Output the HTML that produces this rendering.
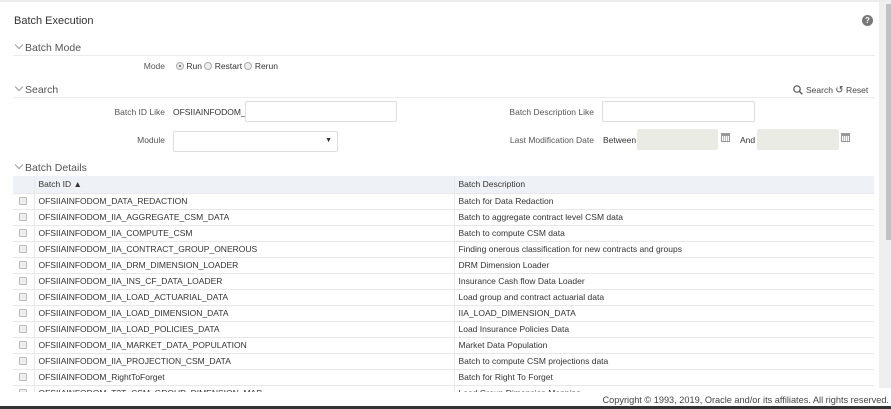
<!DOCTYPE html>
<html><head><meta charset="utf-8"><style>
*{margin:0;padding:0;box-sizing:border-box}
body{width:891px;height:409px;overflow:hidden;background:#fff;font-family:"Liberation Sans",sans-serif;color:#333;position:relative;font-size:9px}
.a{position:absolute;white-space:nowrap}
.sec{position:absolute;left:14px;font-size:10.5px;color:#555}
.sec:before{content:"";display:inline-block;width:5px;height:5px;border-right:1px solid #999;border-bottom:1px solid #999;transform:rotate(45deg);margin:0 3px 3px 2px}
.hr{position:absolute;left:13px;width:862px;height:1px;background:#ececec}
.lbl{position:absolute;color:#555;font-size:8.5px;text-align:right}
.inp{position:absolute;border:1px solid #ddd;border-radius:2px;background:#fff}
.rad{display:inline-block;width:8px;height:8px;border:1px solid #aaa;border-radius:50%;vertical-align:-1px;background:#eee;position:relative}
.rad.on:after{content:"";position:absolute;left:2px;top:2px;width:2px;height:2px;border-radius:50%;background:#555}
table{position:absolute;left:13px;top:176px;width:861px;border-collapse:collapse;font-size:8.5px}
td{height:16px;border-bottom:1px solid #e8e8e8;padding-left:4px;color:#333;white-space:nowrap}
td.c{width:21px;padding-left:6px}
td.i{width:420px;border-left:1px solid #e8e8e8}
td.d{border-left:1px solid #e8e8e8}
tr.h td{background:#eef2f6;height:17px}
.cb{display:inline-block;width:8px;height:8px;border:1px solid #bbb;border-radius:1px;background:#eee;vertical-align:-1px}
.cal{position:absolute;width:9px;height:9px;border:1px solid #999;border-top:3px solid #999;background:repeating-linear-gradient(90deg,#fff 0 1px,#bbb 1px 2px)}
</style></head><body>
<div style="position:absolute;left:0;top:0;width:891px;height:2px;background:#ececec"></div>
<div class="a" style="left:14px;top:15px;font-size:11px;color:#333">Batch Execution</div>
<div class="a" style="left:862px;top:15px;width:11px;height:11px;border-radius:50%;background:#777;color:#fff;font-size:8px;font-weight:bold;text-align:center;line-height:11px">?</div>

<div class="sec" style="top:42px">Batch Mode</div>
<div class="hr" style="top:55px"></div>
<div class="lbl" style="left:100px;width:65px;top:61px">Mode</div>
<div class="a" style="left:176px;top:61px;font-size:8.5px"><span class="rad on"></span> Run <span class="rad"></span> Restart <span class="rad"></span> Rerun</div>

<div class="sec" style="top:84px">Search</div>
<div class="hr" style="top:97px"></div>
<svg class="a" style="left:793px;top:85px" width="10" height="10" viewBox="0 0 10 10"><circle cx="4" cy="4" r="3.2" fill="none" stroke="#555" stroke-width="1.2"/><path d="M6.3 6.3L9.3 9.3" stroke="#555" stroke-width="1.4"/></svg>
<div class="a" style="left:806px;top:85px;font-size:8.5px;color:#444">Search <span style="font-size:10px">&#8634;</span> Reset</div>
<div class="lbl" style="left:80px;width:85px;top:107px">Batch ID Like</div>
<div class="a" style="left:173px;top:107px;font-size:8.5px">OFSIIAINFODOM_</div>
<div class="inp" style="left:245px;top:101px;width:152px;height:21px"></div>
<div class="lbl" style="left:480px;width:114px;top:107px">Batch Description Like</div>
<div class="inp" style="left:602px;top:101px;width:153px;height:21px"></div>
<div class="lbl" style="left:80px;width:85px;top:135px">Module</div>
<div class="inp" style="left:173px;top:131px;width:165px;height:21px"><span class="a" style="right:5px;top:5px;font-size:7px">&#9660;</span></div>
<div class="lbl" style="left:480px;width:114px;top:135px">Last Modification Date</div>
<div class="a" style="left:603px;top:135px;font-size:8.5px">Between</div>
<div class="a" style="left:637px;top:129px;width:81px;height:21px;background:#ebebe6;border-radius:2px"></div>
<div class="cal" style="left:721px;top:133px"></div>
<div class="a" style="left:740px;top:135px;font-size:8.5px">And</div>
<div class="a" style="left:757px;top:129px;width:82px;height:21px;background:#ebebe6;border-radius:2px"></div>
<div class="cal" style="left:841px;top:133px"></div>

<div class="sec" style="top:162px">Batch Details</div>
<div style="position:absolute;left:0;top:176px;width:880px;height:216px;overflow:hidden">
<table style="left:13px;top:0">
<tr class="h"><td class="c"></td><td class="i">Batch ID &#9650;</td><td class="d">Batch Description</td></tr>
<tr><td class="c"><span class="cb"></span></td><td class="i">OFSIIAINFODOM_DATA_REDACTION</td><td class="d">Batch for Data Redaction</td></tr>
<tr><td class="c"><span class="cb"></span></td><td class="i">OFSIIAINFODOM_IIA_AGGREGATE_CSM_DATA</td><td class="d">Batch to aggregate contract level CSM data</td></tr>
<tr><td class="c"><span class="cb"></span></td><td class="i">OFSIIAINFODOM_IIA_COMPUTE_CSM</td><td class="d">Batch to compute CSM data</td></tr>
<tr><td class="c"><span class="cb"></span></td><td class="i">OFSIIAINFODOM_IIA_CONTRACT_GROUP_ONEROUS</td><td class="d">Finding onerous classification for new contracts and groups</td></tr>
<tr><td class="c"><span class="cb"></span></td><td class="i">OFSIIAINFODOM_IIA_DRM_DIMENSION_LOADER</td><td class="d">DRM Dimension Loader</td></tr>
<tr><td class="c"><span class="cb"></span></td><td class="i">OFSIIAINFODOM_IIA_INS_CF_DATA_LOADER</td><td class="d">Insurance Cash flow Data Loader</td></tr>
<tr><td class="c"><span class="cb"></span></td><td class="i">OFSIIAINFODOM_IIA_LOAD_ACTUARIAL_DATA</td><td class="d">Load group and contract actuarial data</td></tr>
<tr><td class="c"><span class="cb"></span></td><td class="i">OFSIIAINFODOM_IIA_LOAD_DIMENSION_DATA</td><td class="d">IIA_LOAD_DIMENSION_DATA</td></tr>
<tr><td class="c"><span class="cb"></span></td><td class="i">OFSIIAINFODOM_IIA_LOAD_POLICIES_DATA</td><td class="d">Load Insurance Policies Data</td></tr>
<tr><td class="c"><span class="cb"></span></td><td class="i">OFSIIAINFODOM_IIA_MARKET_DATA_POPULATION</td><td class="d">Market Data Population</td></tr>
<tr><td class="c"><span class="cb"></span></td><td class="i">OFSIIAINFODOM_IIA_PROJECTION_CSM_DATA</td><td class="d">Batch to compute CSM projections data</td></tr>
<tr><td class="c"><span class="cb"></span></td><td class="i">OFSIIAINFODOM_RightToForget</td><td class="d">Batch for Right To Forget</td></tr>
<tr><td class="c"><span class="cb"></span></td><td class="i">OFSIIAINFODOM_T2T_CSM_GROUP_DIMENSION_MAP</td><td class="d">Load Group Dimension Mapping</td></tr>
</table></div>

<div style="position:absolute;left:879px;top:2px;width:12px;height:386px;background:#efefef"></div>
<div style="position:absolute;left:886px;top:4px;width:5px;height:236px;background:#c2c2c2"></div>
<div class="a" style="right:2px;top:395px;font-size:9.2px;color:#444;background:#fff;padding-left:2px">Copyright © 1993, 2019, Oracle and/or its affiliates. All rights reserved.</div>
<div style="position:absolute;left:0;top:406px;width:891px;height:3px;background:#333"></div>
</body></html>
